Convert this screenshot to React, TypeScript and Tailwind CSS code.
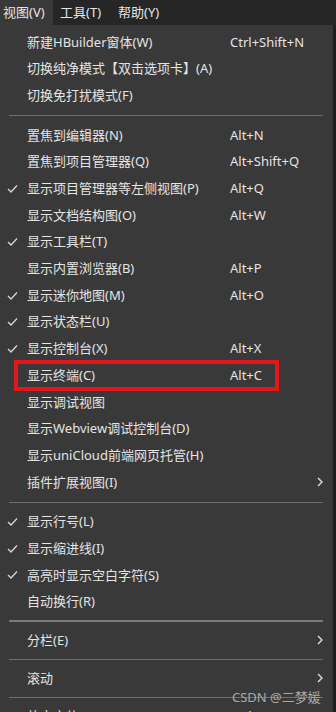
import React from 'react';

type Item =
  | { sep: true; thick?: boolean; tight?: boolean }
  | { sep?: false; label: string; key?: string; checked?: boolean; sub?: boolean; boxed?: boolean };

const items: Item[] = [
  { label: '新建HBuilder窗体(W)', key: 'Ctrl+Shift+N' },
  { label: '切换纯净模式【双击选项卡】(A)' },
  { label: '切换免打扰模式(F)' },
  { sep: true },
  { label: '置焦到编辑器(N)', key: 'Alt+N' },
  { label: '置焦到项目管理器(Q)', key: 'Alt+Shift+Q' },
  { label: '显示项目管理器等左侧视图(P)', key: 'Alt+Q', checked: true },
  { label: '显示文档结构图(O)', key: 'Alt+W' },
  { label: '显示工具栏(T)', checked: true },
  { label: '显示内置浏览器(B)', key: 'Alt+P' },
  { label: '显示迷你地图(M)', key: 'Alt+O', checked: true },
  { label: '显示状态栏(U)', checked: true },
  { label: '显示控制台(X)', key: 'Alt+X', checked: true },
  { label: '显示终端(C)', key: 'Alt+C', boxed: true },
  { label: '显示调试视图' },
  { label: '显示Webview调试控制台(D)' },
  { label: '显示uniCloud前端网页托管(H)' },
  { label: '插件扩展视图(I)', sub: true },
  { sep: true },
  { label: '显示行号(L)', checked: true },
  { label: '显示缩进线(I)', checked: true },
  { label: '高亮时显示空白字符(S)', checked: true },
  { label: '自动换行(R)' },
  { sep: true, thick: true, tight: true },
  { label: '分栏(E)', sub: true },
  { sep: true, tight: true },
  { label: '滚动', sub: true },
  { sep: true, tight: true },
  { label: '放大字体(Z)', key: 'Ctrl+=' },
];

function Check() {
  return (
    <svg width="11" height="9" viewBox="0 0 11 9" className="absolute left-[7px] top-1/2 -translate-y-1/2">
      <path d="M1 4.5 L4 7.5 L10 1" fill="none" stroke="#d6d6d6" strokeWidth="1.3" />
    </svg>
  );
}

function Chevron() {
  return (
    <svg width="6" height="10" viewBox="0 0 6 10" className="absolute left-[317px] top-1/2 -translate-y-1/2">
      <path d="M1 1 L5 5 L1 9" fill="none" stroke="#d6d6d6" strokeWidth="1.5" />
    </svg>
  );
}

export default function App() {
  return (
    <div
      className="w-[336px] h-[712px] overflow-hidden bg-[#262626] text-[13px] text-[#e4e4e4]"
      style={{ fontFamily: '"Noto Sans", "Noto Sans CJK SC", sans-serif' }}
    >
      {/* menu bar */}
      <div className="flex h-[25px] items-center">
        <div className="flex h-full w-[53px] items-center bg-[#393939] pl-[3px]">视图(V)</div>
        <div className="pl-[7px]">工具(T)</div>
        <div className="pl-[17px]">帮助(Y)</div>
      </div>

      {/* dropdown */}
      <div className="relative flex">
        <div className="w-[333px] bg-[#393939] pt-[4px]">
          {items.map((it, i) =>
            it.sep ? (
              <div
                key={i}
                className={
                  it.tight
                    ? 'flex h-[11.5px] items-center pl-[9px] pr-[10px]'
                    : 'flex h-[13px] items-center pl-[9px] pr-[10px]'
                }
              >
                <div className={it.thick ? 'h-[2px] w-full bg-[#7a7a7a]' : 'h-px w-full bg-[#6e6e6e]'} />
              </div>
            ) : (
              <div key={i} className="relative flex h-[26.7px] items-center whitespace-nowrap">
                {it.checked && <Check />}
                <span className="pl-[27px]">{it.label}</span>
                {it.key && <span className="absolute left-[230px]">{it.key}</span>}
                {it.sub && <Chevron />}
                {it.boxed && (
                  <div className="absolute left-[14px] top-[-2px] h-[31px] w-[265px] border-[4px] border-[#e8141c]" />
                )}
              </div>
            )
          )}
        </div>
        <div className="w-[3px] bg-[#1f1f1f]" />
        <div className="absolute left-[232px] top-[663px] text-[13px] text-[#a9a9a9]">CSDN @二梦媛</div>
      </div>
    </div>
  );
}
